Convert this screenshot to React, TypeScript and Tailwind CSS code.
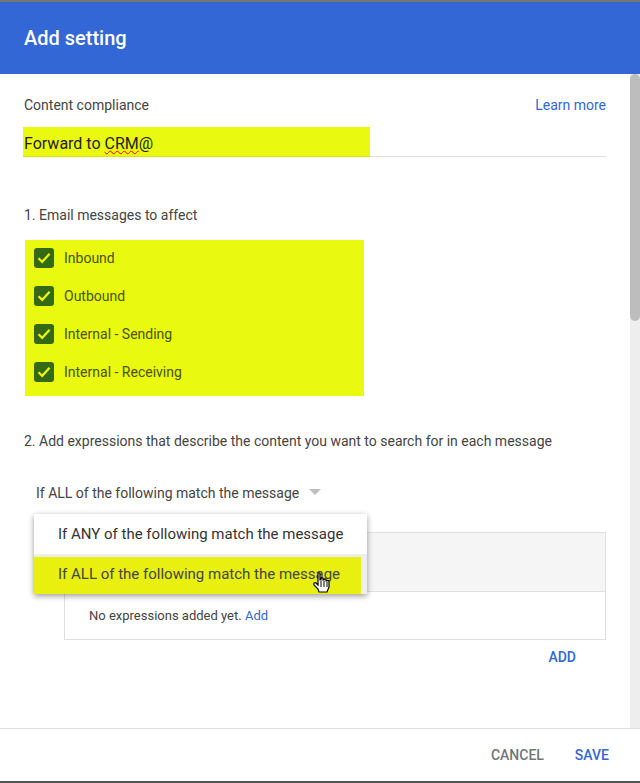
import React from 'react';

const rows = ['Inbound', 'Outbound', 'Internal - Sending', 'Internal - Receiving'];

const Check = () => (
  <span className="flex h-5 w-5 items-center justify-center rounded-[3px] bg-[#366913]">
    <svg width="14" height="12" viewBox="0 0 14 12" fill="none">
      <path d="M1.5 6.2 5.2 9.8 12.6 1.8" stroke="#e9f90f" strokeWidth="2.2" />
    </svg>
  </span>
);

const Cursor = () => (
  <svg className="absolute left-[312px] top-[572px]" width="20" height="22" viewBox="0 0 20 22">
    <path
      d="M6 1.5c0-1 2-1 2 0V8l1 0V6.500c0-1 2-1 2 0V8l1 0V7.500c0-1 2-1 2 0V9l1 0c0-1 2-1 2 .5V15l-2 5H7l-1-3-4-4c-1-2 1-3 2-2l2 2z"
      fill="#fff"
      stroke="#000"
      strokeWidth="1.2"
    />
    <path d="M9 9v6M12 9v6M15 10v5" stroke="#000" strokeWidth="1" />
  </svg>
);

export default function App() {
  return (
    <div className="relative flex h-[783px] w-[640px] flex-col overflow-hidden bg-white font-['Roboto',sans-serif] text-[14px] text-[#444]">
      <div className="h-[2px] bg-[#757575]" />
      <header className="flex h-[72px] items-center bg-[#3367d6] px-6 text-[20px] font-medium text-white">Add setting</header>

      <div className="flex h-[654px]">
        <main className="w-[630px] pl-6 pr-6">
          <div className="flex h-[53px] items-end justify-between pb-[12px] leading-[20px]">
            <span>Content compliance</span>
            <a className="text-[#3367d6]">Learn more</a>
          </div>
          <div className="-ml-px h-[30px] border-b border-[#dedede]">
            <div className="h-[30px] w-[347px] border-b border-[#d8e40c] bg-[#e9f90f] pl-px text-[16px] leading-[33px] text-[#222]">
              Forward to <span className="underline decoration-[#ff0000] decoration-wavy decoration-1 underline-offset-[1px]">CRM</span>@
            </div>
          </div>

          <p className="mt-[48px] leading-[20px]">1. Email messages to affect</p>

          <ul className="ml-px mt-[15px] flex h-[156px] w-[339px] flex-col gap-[18px] bg-[#e9f90f] py-2 pl-[9px] text-[#4a5200]">
            {rows.map((r) => (
              <li key={r} className="flex h-5 items-center gap-[10px]">
                <Check />
                {r}
              </li>
            ))}
          </ul>

          <p className="mt-[35px] leading-[20px]">2. Add expressions that describe the content you want to search for in each message</p>

          <div className="ml-3 mt-[32px] flex h-5 items-center">
            If ALL of the following match the message
            <span className="ml-[10px] mb-[3px] h-0 w-0 border-x-[6px] border-t-[6px] border-x-transparent border-t-[#bdbdbd]" />
          </div>

          <div className="ml-10 mt-[29px] h-[108px] border border-[#e0e0e0]">
            <div className="h-[59px] border-b border-[#e0e0e0] bg-[#f5f5f5]" />
            <p className="pl-6 pt-[14px] text-[13px] leading-[20px]">
              No expressions added yet. <a className="text-[#3367d6]">Add</a>
            </p>
          </div>

          <div className="mt-[7px] flex justify-end pr-[30px] text-[14px] font-medium leading-[21px] text-[#3367d6]">ADD</div>
        </main>

        <div className="w-[10px] bg-[#eeeeee]">
          <div className="h-[247px] rounded-[5px] bg-[#bdbdbd]" />
        </div>
      </div>

      <footer className="flex h-[53px] items-center justify-end gap-[31px] border-t border-[#e0e0e0] pr-[31px] text-[14px] font-medium">
        <span className="text-[#757575]">CANCEL</span>
        <span className="text-[#3367d6]">SAVE</span>
      </footer>
      <div className="h-[2px] bg-[#555]" />

      <div className="absolute left-[34px] top-[514px] w-[333px] bg-white text-[15px] text-[#333] shadow-[0_2px_6px_rgba(0,0,0,0.4)]">
        <div className="flex h-[40px] items-center pl-6">If ANY of the following match the message</div>
        <div className="h-[40px] bg-[#eeeeee] pt-[3px]">
          <div className="flex h-[37px] w-[327px] items-center bg-[#e9f00f] pb-[2px] pl-6 text-[#444]">If ALL of the following match the message</div>
        </div>
      </div>
      <Cursor />
    </div>
  );
}
